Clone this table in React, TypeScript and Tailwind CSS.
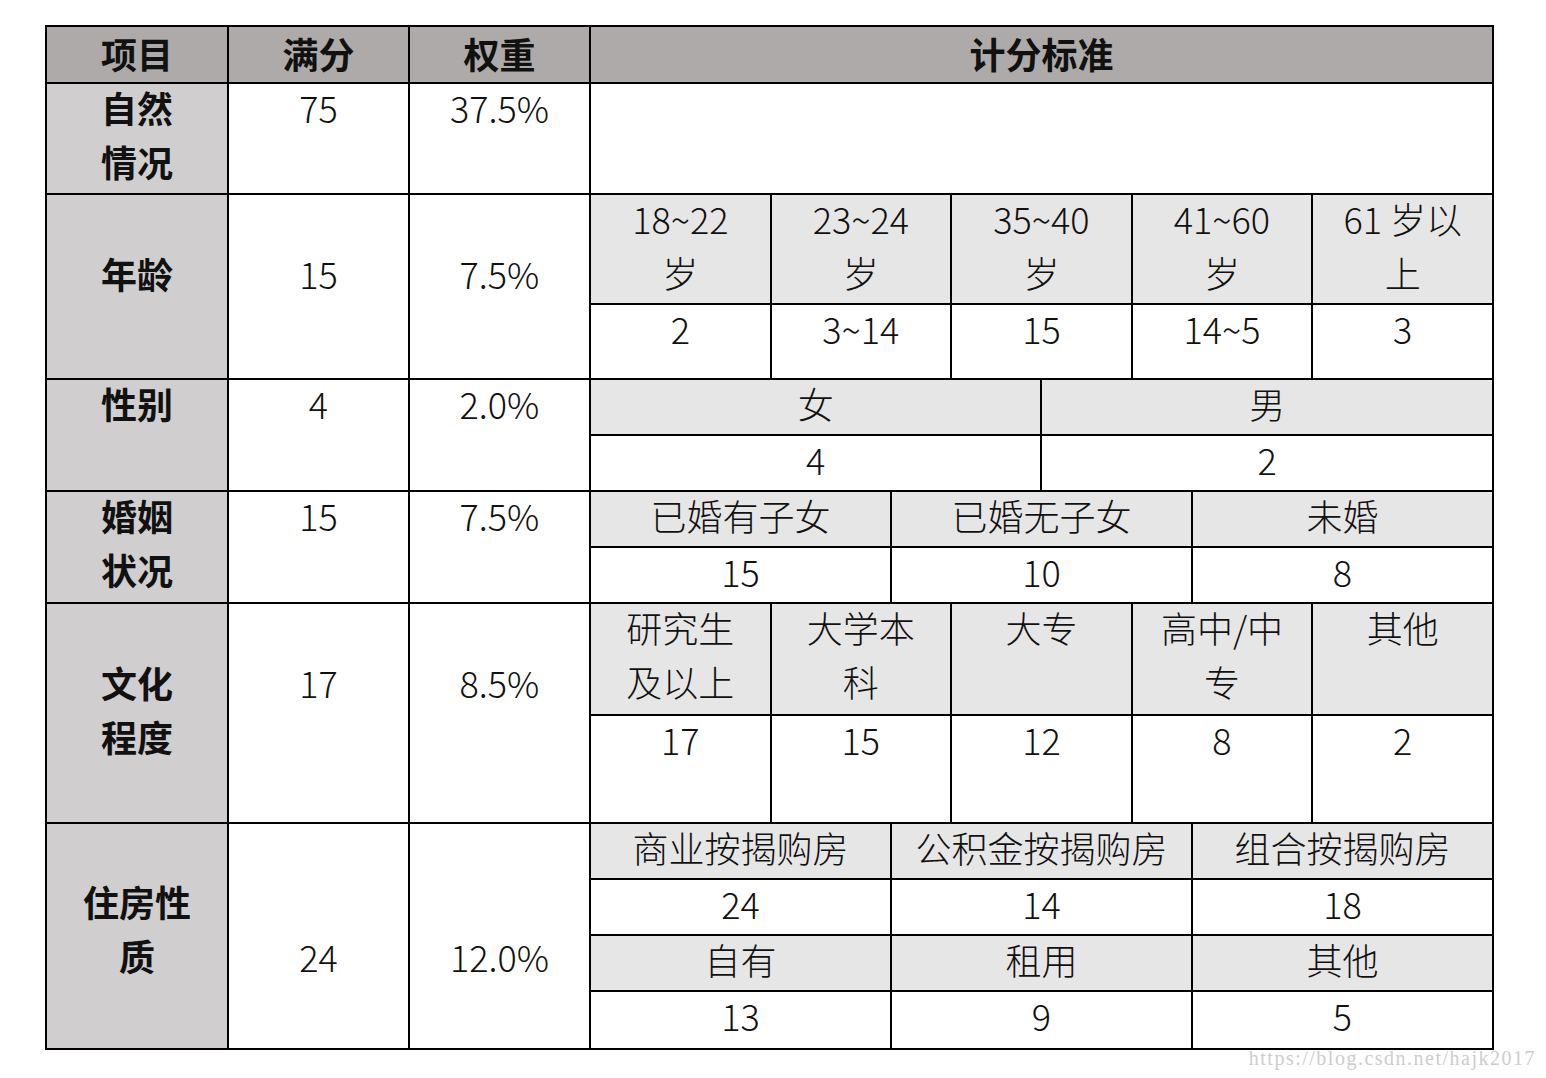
import React from "react";

const B = "border-[2.5px] border-black text-center p-0";
const HEAD = `${B} bg-[#aeaaaa] font-bold align-middle`;
const LBL = `${B} bg-[#d0cece] font-bold align-top`;
const W = `${B} bg-white align-top`;
const G = `${B} bg-[#e7e6e6] align-top`;

type CP = {
  cls: string;
  span?: number;
  rows?: number;
  pt?: string;
  children?: React.ReactNode;
};

function C({ cls, span, rows, pt = "", children }: CP) {
  return (
    <td className={`${cls} ${pt}`} colSpan={span} rowSpan={rows}>
      <div className="-mt-[4px]">{children}</div>
    </td>
  );
}

export default function App() {
  const cols = Array.from({ length: 30 });
  return (
    <div className="relative w-[1546px] h-[1078px] bg-white pl-[45px] pt-[25px] font-['Noto_Sans_CJK_SC',sans-serif] font-light text-[36px] leading-[54px] text-[#111]">
      <table className="table-fixed border-collapse w-[1447px] border-[2.5px] border-black">
        <colgroup>
          <col className="w-[182px]" />
          <col className="w-[181px]" />
          <col className="w-[181px]" />
          {cols.map((_, i) => (
            <col key={i} className="w-[30.1px]" />
          ))}
        </colgroup>
        <tbody>
          <tr className="h-[57px]">
            <C cls={HEAD}>项目</C>
            <C cls={HEAD}>满分</C>
            <C cls={HEAD}>权重</C>
            <C cls={HEAD} span={30}>计分标准</C>
          </tr>
          <tr className="h-[111px]">
            <C cls={LBL}>自然<br />情况</C>
            <C cls={W}>75</C>
            <C cls={W}>37.5%</C>
            <td className={W} colSpan={30}></td>
          </tr>
          <tr className="h-[110px]">
            <C cls={LBL} rows={2} pt="pt-[55px]">年龄</C>
            <C cls={W} rows={2} pt="pt-[55px]">15</C>
            <C cls={W} rows={2} pt="pt-[55px]">7.5%</C>
            <C cls={G} span={6}>18~22<br />岁</C>
            <C cls={G} span={6}>23~24<br />岁</C>
            <C cls={G} span={6}>35~40<br />岁</C>
            <C cls={G} span={6}>41~60<br />岁</C>
            <C cls={G} span={6}>61 岁以<br />上</C>
          </tr>
          <tr className="h-[75px]">
            <C cls={W} span={6}>2</C>
            <C cls={W} span={6}>3~14</C>
            <C cls={W} span={6}>15</C>
            <C cls={W} span={6}>14~5</C>
            <C cls={W} span={6}>3</C>
          </tr>
          <tr className="h-[56px]">
            <C cls={LBL} rows={2}>性别</C>
            <C cls={W} rows={2}>4</C>
            <C cls={W} rows={2}>2.0%</C>
            <C cls={G} span={15}>女</C>
            <C cls={G} span={15}>男</C>
          </tr>
          <tr className="h-[56px]">
            <C cls={W} span={15}>4</C>
            <C cls={W} span={15}>2</C>
          </tr>
          <tr className="h-[56px]">
            <C cls={LBL} rows={2}>婚姻<br />状况</C>
            <C cls={W} rows={2}>15</C>
            <C cls={W} rows={2}>7.5%</C>
            <C cls={G} span={10}>已婚有子女</C>
            <C cls={G} span={10}>已婚无子女</C>
            <C cls={G} span={10}>未婚</C>
          </tr>
          <tr className="h-[56px]">
            <C cls={W} span={10}>15</C>
            <C cls={W} span={10}>10</C>
            <C cls={W} span={10}>8</C>
          </tr>
          <tr className="h-[112px]">
            <C cls={LBL} rows={2} pt="pt-[55px]">文化<br />程度</C>
            <C cls={W} rows={2} pt="pt-[55px]">17</C>
            <C cls={W} rows={2} pt="pt-[55px]">8.5%</C>
            <C cls={G} span={6}>研究生<br />及以上</C>
            <C cls={G} span={6}>大学本<br />科</C>
            <C cls={G} span={6}>大专</C>
            <C cls={G} span={6}>高中/中<br />专</C>
            <C cls={G} span={6}>其他</C>
          </tr>
          <tr className="h-[108px]">
            <C cls={W} span={6}>17</C>
            <C cls={W} span={6}>15</C>
            <C cls={W} span={6}>12</C>
            <C cls={W} span={6}>8</C>
            <C cls={W} span={6}>2</C>
          </tr>
          <tr className="h-[56px]">
            <C cls={LBL} rows={4} pt="pt-[54px]">住房性<br />质</C>
            <C cls={W} rows={4} pt="pt-[109px]">24</C>
            <C cls={W} rows={4} pt="pt-[109px]">12.0%</C>
            <C cls={G} span={10}>商业按揭购房</C>
            <C cls={G} span={10}>公积金按揭购房</C>
            <C cls={G} span={10}>组合按揭购房</C>
          </tr>
          <tr className="h-[56px]">
            <C cls={W} span={10}>24</C>
            <C cls={W} span={10}>14</C>
            <C cls={W} span={10}>18</C>
          </tr>
          <tr className="h-[56px]">
            <C cls={G} span={10}>自有</C>
            <C cls={G} span={10}>租用</C>
            <C cls={G} span={10}>其他</C>
          </tr>
          <tr className="h-[58px]">
            <C cls={W} span={10}>13</C>
            <C cls={W} span={10}>9</C>
            <C cls={W} span={10}>5</C>
          </tr>
        </tbody>
      </table>
      <div className="absolute right-[10px] top-[1045px] font-['Liberation_Serif',serif] text-[20px] leading-[26px] tracking-[1.5px] text-[#cdcdcd]">
        https://blog.csdn.net/hajk2017
      </div>
    </div>
  );
}
